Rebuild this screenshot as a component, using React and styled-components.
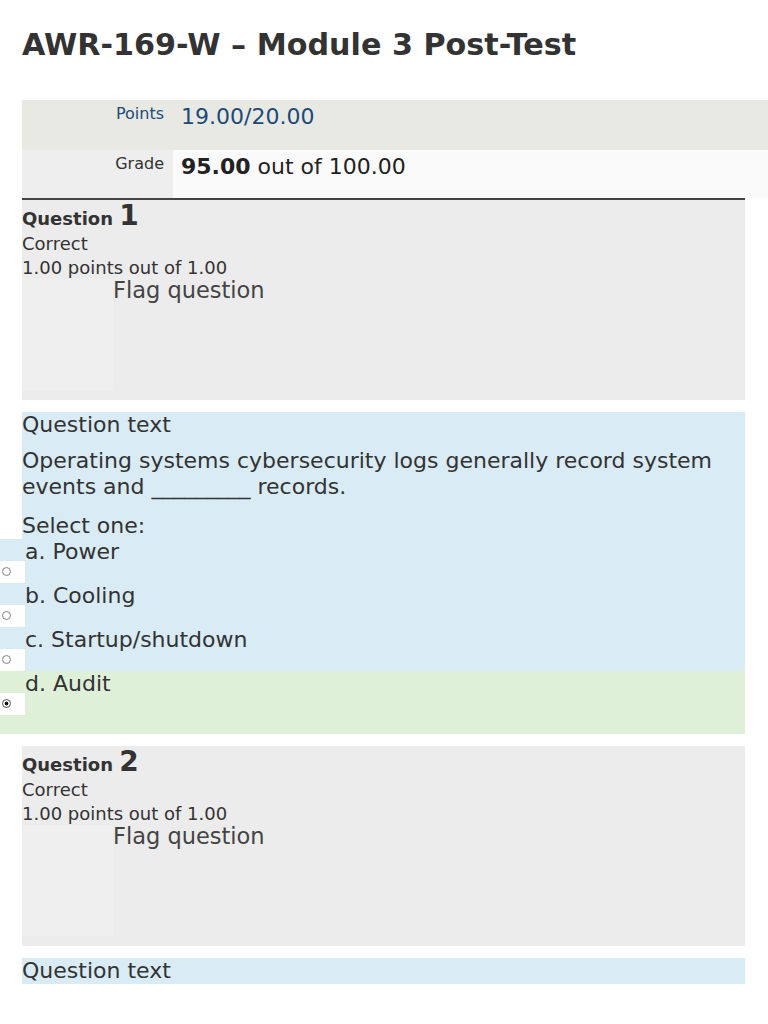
import React from "react";
import styled, { createGlobalStyle } from "styled-components";

const GlobalStyle = createGlobalStyle`
  body {
    margin: 0;
    background: #fff;
    font-family: "DejaVu Sans", "Liberation Sans", sans-serif;
    color: #333;
  }
`;

const Page = styled.div`
  padding: 0 23px 40px 22px;
`;

const Title = styled.h2`
  margin: 27px 0 37px;
  font-size: 30.2px;
  line-height: 36px;
  font-weight: bold;
  color: #333;
`;

// summary table: points + grade
const Summary = styled.div`
  margin-right: -23px;
`;

const SummaryRow = styled.div`
  display: grid;
  grid-template-columns: 151px 1fr;
  height: ${(p) => p.$height}px;
  background: ${(p) => (p.$shade ? "#e9e9e4" : "#fafafa")};
`;

const Label = styled.div`
  padding: 4px 9px 0 0;
  text-align: right;
  font-size: 16px;
  color: ${(p) => (p.$blue ? "#1d4a78" : "#333")};
  background: ${(p) => (p.$shade ? "#e9e9e4" : "#eeeeee")};
`;

const Value = styled.div`
  padding: 4px 0 0 8px;
  font-size: 22px;
  color: ${(p) => (p.$blue ? "#1d4a78" : "#222")};
`;

const QuestionInfo = styled.div`
  background: #ececec;
  border-top: ${(p) => (p.$first ? "2px solid #444" : "none")};
  padding-bottom: 10px;
  margin-bottom: 12px;
`;

const QNo = styled.h3`
  margin: 0;
  height: 32px;
  box-sizing: border-box;
  padding-top: 2px;
  line-height: 1;
  font-size: 18px;
  font-weight: bold;
  color: #333;
`;

const QNum = styled.span`
  font-size: 28px;
  line-height: 1;
`;

const InfoLine = styled.div`
  font-size: 18px;
  line-height: 23.5px;
  color: #333;
`;

const FlagRow = styled.div`
  display: flex;
  height: 111px;
`;

const FlagSpace = styled.div`
  width: 91px;
  background: #efefef;
`;

const FlagText = styled.div`
  font-size: 22.5px;
  line-height: 22px;
  color: #444;
`;

const Content = styled.div`
  background: #d9ebf5;
  margin-bottom: 12px;
  padding-bottom: ${(p) => p.$pad || 0}px;
`;

const ContentTitle = styled.div`
  font-size: 22px;
  color: #333;
`;

const QText = styled.p`
  margin: 11px 0 12px;
  font-size: 22px;
  line-height: 26.4px;
  color: #333;
`;

const Prompt = styled.div`
  font-size: 22px;
  line-height: 26.4px;
  color: #333;
`;

const Answers = styled.div`
  margin-left: -22px;
`;

const Option = styled.div`
  background: ${(p) => (p.$correct ? "#dff0d8" : "#d9ebf5")};
  &:last-child {
    padding-bottom: 19px;
  }
`;

const OptionText = styled.div`
  padding: 3px 0 0 25px;
  font-size: 22px;
  line-height: 19px;
  color: #333;
`;

const RadioBox = styled.div`
  width: 25px;
  height: 22px;
  background: #fff;
  padding: 6px 0 0 2px;
  box-sizing: border-box;
`;

const Radio = styled.input`
  appearance: none;
  margin: 0;
  display: block;
  width: 9px;
  height: 9px;
  border-radius: 50%;
  border: 1px solid #8a8a8a;
  background: radial-gradient(circle, #fff 40%, #e6e6e6 100%);
  box-sizing: border-box;

  &:checked {
    background: radial-gradient(circle, #111 0 1.6px, #fff 2.2px, #e6e6e6 100%);
    border-color: #555;
  }
`;

const options = [
  { key: "a", text: "a. Power" },
  { key: "b", text: "b. Cooling" },
  { key: "c", text: "c. Startup/shutdown" },
  { key: "d", text: "d. Audit", correct: true },
];

const QuestionHead = ({ num, first }) => (
  <QuestionInfo $first={first}>
    <QNo>
      Question <QNum>{num}</QNum>
    </QNo>
    <InfoLine>Correct</InfoLine>
    <InfoLine>1.00 points out of 1.00</InfoLine>
    <FlagRow>
      <FlagSpace />
      <FlagText>Flag question</FlagText>
    </FlagRow>
  </QuestionInfo>
);

const App = () => {
  return (
    <>
      <GlobalStyle />
      <Page>
        <Title>AWR-169-W – Module 3 Post-Test</Title>

        <Summary>
          <SummaryRow $shade $height={50}>
            <Label $shade $blue>Points</Label>
            <Value $blue>19.00/20.00</Value>
          </SummaryRow>
          <SummaryRow $height={48}>
            <Label>Grade</Label>
            <Value>
              <b>95.00</b> out of 100.00
            </Value>
          </SummaryRow>
        </Summary>

        <QuestionHead num="1" first />
        <Content>
          <ContentTitle>Question text</ContentTitle>
          <QText>
            Operating systems cybersecurity logs generally record system
            events and _________ records.
          </QText>
          <Prompt>Select one:</Prompt>
          <Answers>
            {options.map((o) => (
              <Option key={o.key} $correct={o.correct}>
                <OptionText>{o.text}</OptionText>
                <RadioBox>
                  <Radio
                    type="radio"
                    name="q1"
                    defaultChecked={!!o.correct}
                    disabled
                  />
                </RadioBox>
              </Option>
            ))}
          </Answers>
        </Content>

        <QuestionHead num="2" />
        <Content $pad={1}>
          <ContentTitle>Question text</ContentTitle>
        </Content>
      </Page>
    </>
  );
};

export default App;
